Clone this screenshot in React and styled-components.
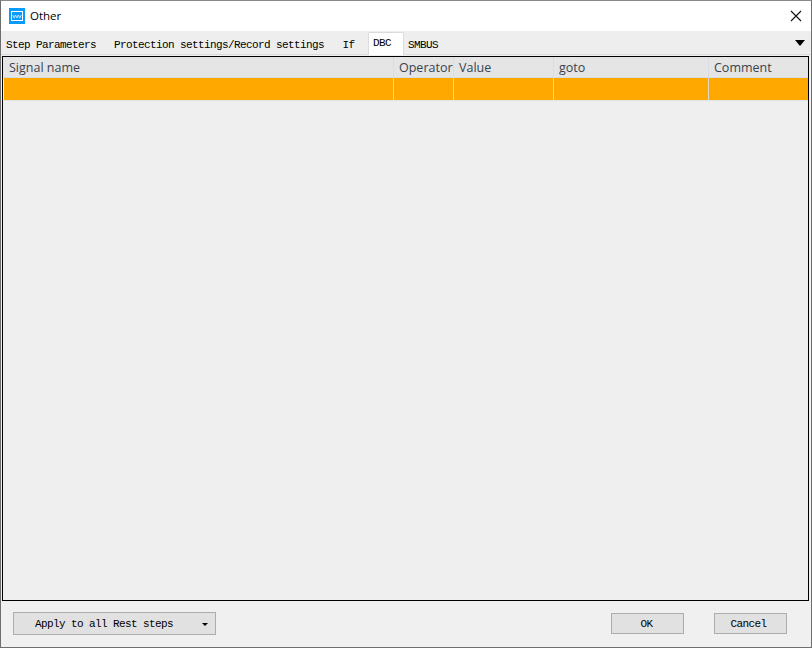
import { createGlobalStyle } from 'styled-components'
import styled from 'styled-components'

const GlobalStyle = createGlobalStyle`
  html, body {
    margin: 0;
    padding: 0;
    background: #f0f0f0;
  }
`

const Window = styled.div`
  width: 812px;
  height: 648px;
  box-sizing: border-box;
  display: flex;
  flex-direction: column;
  background: #f0f0f0;
  border: 1px solid #6e6e6e;
  border-top-color: #8a8a8a;
`
const TitleBar = styled.div`
  height: 30px;
  flex: none;
  display: flex;
  align-items: center;
  background: #fff;
  padding-left: 8px;
`
const TitleText = styled.span`
  margin-left: 5px;
  margin-top: -1px;
  font: 11.5px "Open Sans", "Noto Sans", sans-serif;
  color: #000;
`
const CloseButton = styled.div`
  margin-left: auto;
  margin-right: 8px;
  width: 14px;
  height: 14px;
  display: flex;
`
const TabBar = styled.div`
  height: 24px;
  flex: none;
  display: flex;
  align-items: flex-end;
  background: #eeeeee;
  box-shadow: inset 0 -1px 0 #dadada;
  padding-left: 1px;
  position: relative;
`
const Tab = styled.div`
  height: ${p => (p.$active ? '23px' : '22px')};
  box-sizing: border-box;
  padding: ${p => (p.$active ? '4px 0 0 4px' : '6px 0 0 4px')};
  width: ${p => p.$w}px;
  margin-left: ${p => p.$gap || 0}px;
  font: 11px "Liberation Mono", monospace;
  letter-spacing: -0.6px;
  color: #000;
  white-space: pre;
  background: ${p => (p.$active ? '#fff' : 'transparent')};
  border-radius: 2px 2px 0 0;
  border: ${p => (p.$active ? '1px solid #dcdcdc' : 'none')};
  border-bottom: none;
`
const TabMenuArrow = styled.div`
  position: absolute;
  right: 6px;
  top: 9px;
  width: 0;
  height: 0;
  border-left: 5px solid transparent;
  border-right: 5px solid transparent;
  border-top: 6px solid #000;
`
const TableFrame = styled.div`
  flex: 1;
  margin: 1px 1px 0 1px;
  border: 1px solid #000;
  background: #efefef;
  min-height: 0;
  width: 807px;
  box-sizing: border-box;
`
const Row = styled.div`
  display: grid;
  grid-template-columns: 390px 60px 100px 155px 1fr;
  height: ${p => p.$h}px;
  background: ${p => p.$bg};
  border-bottom: 1px solid ${p => p.$line};
  box-sizing: border-box;
  margin-left: ${p => p.$inset}px;
`
const HeadRow = styled(Row)`
  padding-left: 1px;
`
const HeadCell = styled.div`
  border-right: 1px solid #d7dde3;
  padding: 1px 0 0 5px;
  font: 12.5px/20px "Open Sans", "Noto Sans", sans-serif;
  color: #39424d;
  white-space: nowrap;
  overflow: hidden;
  &:last-child { border-right: none; }
`
const BodyCell = styled.div`
  border-right: 1px solid #dfd9cc;
  &:last-child { border-right: none; }
`
const Footer = styled.div`
  height: 46px;
  flex: none;
  display: flex;
  align-items: flex-start;
  padding-left: 12px;
`
const Button = styled.div`
  box-sizing: border-box;
  display: flex;
  align-items: center;
  justify-content: center;
  background: #e1e1e1;
  border: 1px solid #adadad;
  font: 11px "Liberation Mono", monospace;
  letter-spacing: -0.6px;
  color: #000;
  white-space: pre;
`
const MenuButton = styled(Button)`
  width: 203px;
  height: 23px;
  margin-top: 11px;
  justify-content: flex-start;
  padding-left: 21px;
  position: relative;
`
const MenuArrow = styled.span`
  position: absolute;
  right: 7px;
  top: 10px;
  width: 0;
  height: 0;
  border-left: 3px solid transparent;
  border-right: 3px solid transparent;
  border-top: 3px solid #000;
`
const ActionButton = styled(Button)`
  width: 73px;
  height: 21px;
  margin-top: 12px;
  margin-left: ${p => p.$ml}px;
  padding-right: ${p => p.$shift || 0}px;
`

const AppIcon = () => (
  <svg width="16" height="16" viewBox="0 0 16 16">
    <rect width="16" height="16" fill="#0a9bff" />
    <rect x="2.5" y="3.5" width="11" height="9" fill="none" stroke="#fff" />
    <path d="M3.8 7l1.4 3 1.4-3 1.4 3 1.4-3 1.4 3 1.4-3" fill="none" stroke="#fff" strokeWidth="0.7" />
  </svg>
)

const CloseIcon = () => (
  <svg width="14" height="14" viewBox="0 0 14 14">
    <path d="M2 2l10 10M12 2L2 12" stroke="#111" strokeWidth="1.1" fill="none" />
  </svg>
)

const tabs = [
  { label: 'Step Parameters', w: 108 },
  { label: 'Protection settings/Record settings', w: 228.5 },
  { label: 'If', w: 28.5 },
]

const columns = ['Signal name', 'Operator', 'Value', 'goto', 'Comment']

export default function App() {
  return (
    <>
      <GlobalStyle />
      <Window>
        <TitleBar>
          <AppIcon />
          <TitleText>Other</TitleText>
          <CloseButton><CloseIcon /></CloseButton>
        </TitleBar>
        <TabBar>
          {tabs.map((t) => <Tab key={t.label} $w={t.w}>{t.label}</Tab>)}
          <Tab $active $w={36} $gap={1}>DBC</Tab>
          <Tab $w={60}>SMBUS</Tab>
          <TabMenuArrow />
        </TabBar>
        <TableFrame>
          <HeadRow $h={21} $bg="#e5e5e5" $line="#d7dde3" $inset={0}>
            {columns.map((c) => <HeadCell key={c}>{c}</HeadCell>)}
          </HeadRow>
          <Row $h={23} $bg="#ffa800" $line="#dfe3e6" $inset={1}>
            {columns.map((c) => <BodyCell key={c} />)}
          </Row>
        </TableFrame>
        <Footer>
          <MenuButton>Apply to all Rest steps<MenuArrow /></MenuButton>
          <ActionButton $ml={395} $shift={2}>OK</ActionButton>
          <ActionButton $ml={30} $shift={4}>Cancel</ActionButton>
        </Footer>
      </Window>
    </>
  )
}
